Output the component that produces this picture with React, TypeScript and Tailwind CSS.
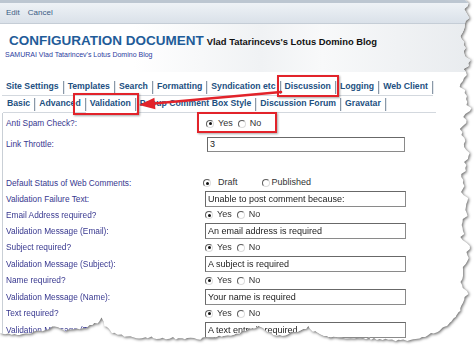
import React, { useMemo } from "react";

function tornClip(): string {
  let seed = 12345;
  const rnd = () => {
    seed = (seed * 16807) % 2147483647;
    return seed / 2147483647;
  };
  const pts: string[] = [];
  pts.push("0px 0px");
  for (let y = 0; y <= 300; y += 3) {
    const x =
      465 +
      3 * Math.sin(y * 0.13) +
      1.8 * Math.sin(y * 0.41 + 1.3) +
      (rnd() - 0.5) * 4;
    pts.push(`${x.toFixed(1)}px ${y}px`);
  }
  const keys: [number, number][] = [
    [464, 300], [460, 310], [452, 322], [440, 330], [425, 336], [410, 340],
    [395, 341], [380, 339], [360, 338], [330, 337], [315, 332], [308, 327],
    [300, 331], [280, 336], [265, 331], [258, 326], [252, 328], [240, 333],
    [225, 336], [200, 339], [160, 338], [130, 337], [112, 333], [105, 325],
    [101, 318], [97, 323], [90, 326], [80, 329], [65, 331], [55, 327],
    [40, 331], [20, 334], [0, 333],
  ];
  for (let i = 0; i < keys.length - 1; i++) {
    const [x0, y0] = keys[i];
    const [x1, y1] = keys[i + 1];
    const d = Math.hypot(x1 - x0, y1 - y0);
    const n = Math.max(1, Math.round(d / 3));
    for (let k = 0; k < n; k++) {
      const t = k / n;
      const x = x0 + (x1 - x0) * t + (rnd() - 0.5) * 1.5;
      const y = y0 + (y1 - y0) * t + (rnd() - 0.5) * 2.6;
      pts.push(`${x.toFixed(1)}px ${y.toFixed(1)}px`);
    }
  }
  pts.push("0px 333px");
  return `polygon(${pts.join(",")})`;
}

function Sep() {
  return <span className="inline-block w-px h-[13px] bg-[#8a98a7] shadow-[1px_0_0_#e3e8ed]" />;
}

function Tab({ label, selected, first }: { label: string; selected?: boolean; first?: boolean }) {
  return (
    <div
      className={
        "flex items-center h-full " +
        (selected ? "border-b border-white" : "border-b border-[#d3d8de]")
      }
    >
      <span className={first ? "pl-[4px] pr-[4px]" : "px-[4px]"}>{label}</span>
      <Sep />
    </div>
  );
}

function Radio({ checked }: { checked?: boolean }) {
  return (
    <span className="relative inline-block w-[8px] h-[8px] rounded-full border border-t-[#5e5e5e] border-l-[#5e5e5e] border-r-[#dcdcdc] border-b-[#dcdcdc] bg-white shrink-0">
      {checked && (
        <span className="absolute left-[1.5px] top-[1.5px] w-[3px] h-[3px] rounded-full bg-[#111]" />
      )}
    </span>
  );
}

function YesNo() {
  return (
    <div className="flex items-center text-[9px] text-[#333]">
      <Radio checked />
      <span className="ml-[4px]">Yes</span>
      <span className="ml-[5px] flex items-center">
        <Radio />
      </span>
      <span className="ml-[4px]">No</span>
    </div>
  );
}

function Box({ text }: { text: string }) {
  return (
    <div className="w-[201px] h-[16px] border border-[#8a8a8a] border-t-[#686868] border-l-[#686868] bg-white px-[2px] text-[9px] leading-[14px] text-[#222] whitespace-nowrap overflow-hidden">
      {text}
    </div>
  );
}

function Row({ label, h, children }: { label: string; h: string; children?: React.ReactNode }) {
  return (
    <div className={"flex items-center " + h}>
      <div className="w-[199px] shrink-0 text-[8.3px] text-[#37378f] whitespace-nowrap">{label}</div>
      <div className="flex items-center">{children}</div>
    </div>
  );
}

export default function App() {
  const clip = useMemo(() => tornClip(), []);
  const mainTabs = [
    "Site Settings",
    "Templates",
    "Search",
    "Formatting",
    "Syndication etc",
    "Discussion",
    "Logging",
    "Web Client",
  ];
  const subTabs = ["Basic", "Advanced", "Validation", "Popup Comment Box Style", "Discussion Forum", "Gravatar"];

  return (
    <div className="relative w-[474px] h-[349px] overflow-hidden bg-white font-['Liberation_Sans',Arial,sans-serif]">
      <div className="[filter:drop-shadow(1.5px_1.5px_1.5px_rgba(0,0,0,0.6))]">
        <div className="relative w-[474px] h-[349px] bg-white" style={{ clipPath: clip }}>
          {/* top action bar */}
          <div className="h-[24px] border-t-[3px] border-[#bcc6d1] border-b border-b-[#c5cdd6] bg-gradient-to-b from-[#eef2f6] to-[#dae1e9] flex items-center pl-[6px] gap-[8px] text-[8px] text-[#3b5c84]">
            <span>Edit</span>
            <span>Cancel</span>
          </div>

          {/* header */}
          <div className="h-[48px] pt-[9px] bg-[linear-gradient(90deg,#ffffff_28%,#f0f2f4_55%,#f8f9fa_68%,#e8ebee_100%)]">
            <div className="flex items-baseline pl-[9px] leading-[16px]">
              <span className="text-[13.5px] font-bold text-[#1f5c99]">CONFIGURATION DOCUMENT</span>
              <span className="ml-[3px] text-[9.4px] font-bold text-[#111]">Vlad Tatarincevs's Lotus Domino Blog</span>
            </div>
            <div className="pl-[5px] text-[7px] leading-[9px] text-[#2c3ca0]">
              SAMURAI Vlad Tatarincev's Lotus Domino Blog
            </div>
          </div>

          {/* main tabs */}
          <div className="mt-[7px] h-[17px] flex items-stretch pl-[2px] text-[8.7px] font-bold text-[#22507f]">
            {mainTabs.map((t, i) => (
              <Tab key={t} label={t} selected={t === "Discussion"} first={i === 0} />
            ))}
          </div>

          {/* sub tabs */}
          <div className="h-[17px] flex items-stretch pl-[3px] text-[8.7px] font-bold text-[#22507f]">
            {subTabs.map((t) => (
              <Tab key={t} label={t} selected={t === "Validation"} />
            ))}
            <div className="w-[50px] border-b border-[#d3d8de]" />
          </div>

          {/* form */}
          <div className="ml-[2px] border-l border-[#c9cfd6] pl-[3px]">
            <Row label="Anti Spam Check?:" h="h-[21px]">
              <div className="pl-[1px]">
                <YesNo />
              </div>
            </Row>
            <Row label="Link Throttle:" h="h-[21px]">
              <div className="ml-[2px] w-[198px] h-[15px] border border-[#8a8a8a] border-t-[#686868] border-l-[#686868] px-[2px] text-[9px] leading-[13px] text-[#222]">
                3
              </div>
            </Row>
            <div className="h-[20px]" />
            <Row label="Default Status of Web Comments:" h="h-[16px]">
              <div className="flex items-center text-[9px] text-[#333]">
                <span className="-ml-[2px] flex items-center">
                  <Radio checked />
                </span>
                <span className="ml-[7px]">Draft</span>
                <span className="ml-[24px] flex items-center">
                  <Radio />
                </span>
                <span className="ml-[2px]">Published</span>
              </div>
            </Row>
            <Row label="Validation Failure Text:" h="h-[16px]">
              <Box text="Unable to post comment because:" />
            </Row>
            <Row label="Email Address required?" h="h-[16px]">
              <YesNo />
            </Row>
            <Row label="Validation Message (Email):" h="h-[16px]">
              <Box text="An email address is required" />
            </Row>
            <Row label="Subject required?" h="h-[17px]">
              <YesNo />
            </Row>
            <Row label="Validation Message (Subject):" h="h-[16px]">
              <Box text="A subject is required" />
            </Row>
            <Row label="Name required?" h="h-[17px]">
              <YesNo />
            </Row>
            <Row label="Validation Message (Name):" h="h-[16px]">
              <Box text="Your name is required" />
            </Row>
            <Row label="Text required?" h="h-[17px]">
              <YesNo />
            </Row>
            <Row label="Validation Message (Text):" h="h-[16px]">
              <Box text="A text entry is required" />
            </Row>
            <div className="h-[20px]" />
          </div>

          {/* annotations */}
          <div className="absolute left-[277px] top-[75px] w-[62px] h-[22px] border-2 border-[#e2232a] shadow-[1px_1px_2px_rgba(0,0,0,0.35)]" />
          <div className="absolute left-[73px] top-[93px] w-[66px] h-[22px] border-2 border-[#e2232a] shadow-[1px_1px_2px_rgba(0,0,0,0.35)]" />
          <div className="absolute left-[197px] top-[112px] w-[80px] h-[21px] border-2 border-[#e2232a] shadow-[1px_1px_2px_rgba(0,0,0,0.35)]" />
          <svg className="absolute left-0 top-0 pointer-events-none" width="474" height="349" viewBox="0 0 474 349">
            <line x1="281" y1="92" x2="154" y2="103.5" stroke="#e2232a" strokeWidth="2.6" strokeLinecap="round" />
            <polygon points="139,105 155.4,109.2 154.4,97.8" fill="#e2232a" />
          </svg>
        </div>
      </div>
    </div>
  );
}
